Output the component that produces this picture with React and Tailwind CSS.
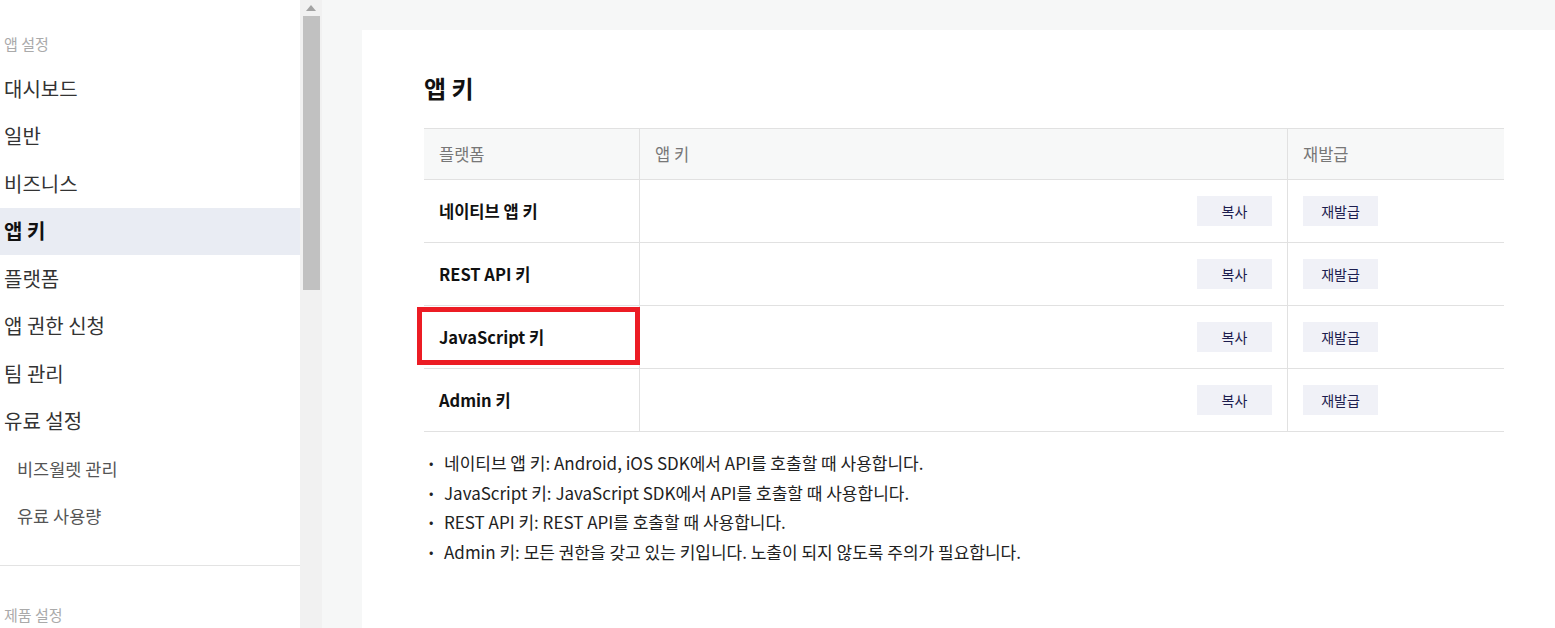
import React from "react";

const font = { fontFamily: '"Noto Sans CJK KR", "Noto Sans", sans-serif' };

const navItems = [
  { label: "대시보드" },
  { label: "일반" },
  { label: "비즈니스" },
  { label: "앱 키", active: true },
  { label: "플랫폼" },
  { label: "앱 권한 신청" },
  { label: "팀 관리" },
  { label: "유료 설정" },
  { label: "비즈월렛 관리", sub: true },
  { label: "유료 사용량", sub: true },
];

const rows = [
  { name: "네이티브 앱 키" },
  { name: "REST API 키" },
  { name: "JavaScript 키", highlight: true },
  { name: "Admin 키" },
];

const notes = [
  "네이티브 앱 키: Android, iOS SDK에서 API를 호출할 때 사용합니다.",
  "JavaScript 키: JavaScript SDK에서 API를 호출할 때 사용합니다.",
  "REST API 키: REST API를 호출할 때 사용합니다.",
  "Admin 키: 모든 권한을 갖고 있는 키입니다. 노출이 되지 않도록 주의가 필요합니다.",
];

function Btn({ children }) {
  return (
    <button className="h-[30px] w-[75px] bg-[#f0f1f7] text-[14px] text-[#1c1d4f] flex items-center justify-center">
      {children}
    </button>
  );
}

export default function App() {
  return (
    <div style={font} className="flex h-[628px] w-[1555px] overflow-hidden bg-[#f6f7f7]">
      {/* Sidebar */}
      <aside className="w-[300px] shrink-0 bg-white flex flex-col">
        <div className="h-[29px]" />
        <div className="pl-[4px] text-[15px] text-[#aaaaaa] h-[30px] leading-[30px]">앱 설정</div>
        <nav className="mt-[6px] flex flex-col">
          {navItems.map((it) => (
            <div
              key={it.label}
              className={
                "h-[47.5px] flex items-center " +
                (it.active ? "bg-[#e9ecf3] font-bold text-[#111] text-[20px] pl-[4px]" : "") +
                (!it.active && !it.sub ? "text-[20px] text-[#333] pl-[4px]" : "") +
                (it.sub ? "text-[17.5px] text-[#555] pl-[17px]" : "")
              }
            >
              {it.label}
            </div>
          ))}
        </nav>
        <div className="mt-[25px] border-t border-[#e3e3e3]" />
        <div className="pl-[4px] mt-[38px] text-[15px] text-[#aaaaaa]">제품 설정</div>
      </aside>

      {/* Scrollbar */}
      <div className="w-[22px] shrink-0 bg-[#f1f1f1] flex flex-col items-center">
        <div className="h-[16px] flex items-center justify-center">
          <svg width="10" height="6" viewBox="0 0 10 6">
            <polygon points="5,0 10,6 0,6" fill="#a3a3a3" />
          </svg>
        </div>
        <div className="w-[17px] h-[274px] bg-[#c1c1c1]" />
      </div>

      {/* Main */}
      <main className="flex-1 pt-[30px] pl-[40px]">
        <div className="bg-white h-[640px] pl-[62px] pr-[52px]">
          <h1 className="pt-[42px] text-[24px] font-bold text-[#111] leading-[32px]">앱 키</h1>
          <div className="mt-[24px] w-[1080px]">
            <div className="flex h-[52px] bg-[#f7f8f8] border-y border-[#e1e1e1] text-[16.5px] text-[#777]">
              <div className="w-[216px] border-r border-[#e1e1e1] flex items-center pl-[15px]">플랫폼</div>
              <div className="w-[648px] border-r border-[#e1e1e1] flex items-center pl-[15px]">앱 키</div>
              <div className="flex-1 flex items-center pl-[15px]">재발급</div>
            </div>
            {rows.map((r) => (
              <div key={r.name} className="flex h-[63px] border-b border-[#e1e1e1]">
                <div className="w-[216px] border-r border-[#e1e1e1] flex items-center pl-[15px] text-[16.5px] font-bold text-[#111] relative">
                  {r.name}
                  {r.highlight && (
                    <div className="absolute left-[-7px] top-[1px] w-[223px] h-[58px] border-[5px] border-[#ec1c24]" />
                  )}
                </div>
                <div className="w-[648px] border-r border-[#e1e1e1] flex items-center justify-end pr-[15px]">
                  <Btn>복사</Btn>
                </div>
                <div className="flex-1 flex items-center pl-[15px]">
                  <Btn>재발급</Btn>
                </div>
              </div>
            ))}
          </div>
          <ul className="mt-[16px] flex flex-col">
            {notes.map((n) => (
              <li key={n} className="h-[29.7px] flex items-center text-[17px] text-[#222]">
                <span className="w-[20px] pl-[5px] text-[13px]">•</span>
                {n}
              </li>
            ))}
          </ul>
        </div>
      </main>
    </div>
  );
}
